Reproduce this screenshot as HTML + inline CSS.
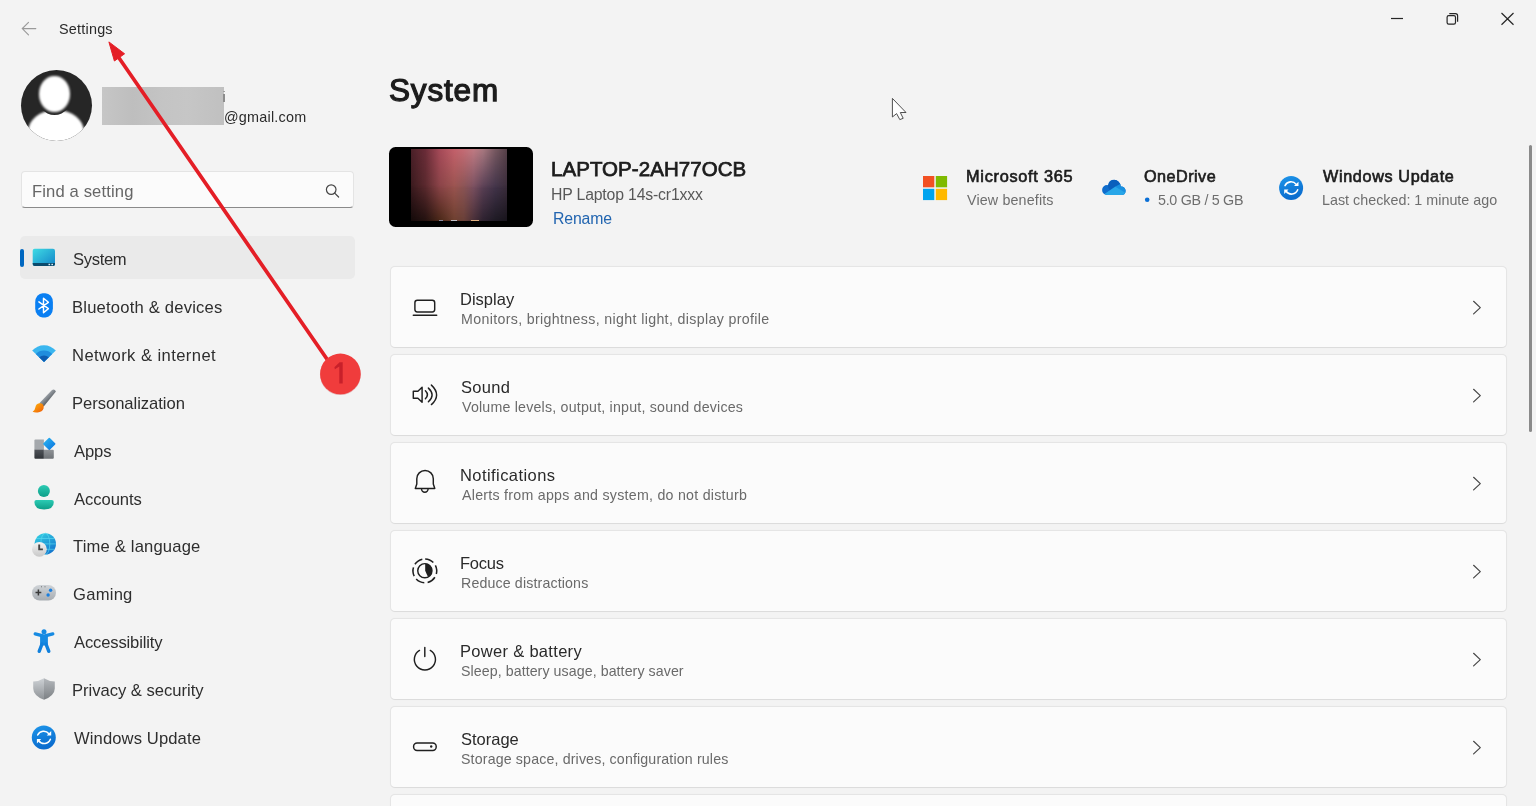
<!DOCTYPE html>
<html><head><meta charset="utf-8"><title>Settings</title>
<style>
html,body{margin:0;padding:0;width:1536px;height:806px;overflow:hidden;background:#f3f3f3;font-family:"Liberation Sans",sans-serif;}
.t{position:absolute;white-space:nowrap;will-change:transform;}
.abs{position:absolute;}
.card{position:absolute;left:390px;width:1115px;height:80.8px;background:#fbfbfb;border:1px solid #e5e5e5;border-bottom-color:#dcdcdc;border-radius:5px;box-sizing:content-box;box-shadow:0 0 0.8px rgba(0,0,0,0.07);}
svg.ov{position:absolute;left:0;top:0;}
</style></head><body>

<!-- avatar -->
<div class="abs" style="left:21.3px;top:69.9px;width:71.2px;height:71.2px;border-radius:50%;background:#262626;overflow:hidden;">
  <div class="abs" style="left:7px;top:40px;width:56px;height:50px;border-radius:27px 27px 0 0 / 22px 22px 0 0;background:#fff;filter:blur(0.9px)"></div>
  <div class="abs" style="left:14.8px;top:2.6px;width:37px;height:42.5px;border-radius:50%;background:#262626;filter:blur(0.6px)"></div>
  <div class="abs" style="left:18.1px;top:5.9px;width:30.6px;height:36px;border-radius:50%;background:#fff;filter:blur(0.9px)"></div>
</div>
<!-- blurred name -->
<div class="abs" style="left:102.4px;top:87.1px;width:121.7px;height:37.6px;background:linear-gradient(90deg,#c6c6c6,#bebebe 25%,#c4c4c4 50%,#c6c6c6 70%,#c0c0c0);"></div>
<div class="abs" style="left:223.4px;top:93.7px;width:1.6px;height:8.6px;background:#8c8c8c;"></div><div class="abs" style="left:223.4px;top:90.6px;width:1.6px;height:1.5px;background:#a0a0a0;"></div>

<!-- search box -->
<div class="abs" style="left:21px;top:171px;width:331px;height:35px;background:#fbfbfb;border:1px solid #e4e4e4;border-bottom:1px solid #8a8a8a;border-radius:4px;"></div>

<!-- nav selection -->
<div class="abs" style="left:20px;top:236px;width:335px;height:43px;background:#eaeaea;border-radius:5px;"></div>
<div class="abs" style="left:20px;top:249px;width:3.5px;height:18px;background:#0067c0;border-radius:2px;"></div>

<!-- device image -->
<div class="abs" style="left:389px;top:147.4px;width:144px;height:80px;background:#000;border-radius:6.5px;overflow:hidden;">
  <div class="abs" style="left:22px;top:2px;width:96px;height:72px;background:linear-gradient(90deg,#140a0a 0%,#241210 15%,#4a2818 30%,#6e4030 45%,#6a4038 55%,#4a3038 65%,#2e2230 75%,#1e1a24 88%,#18141c 100%);"></div>
  <div class="abs" style="left:22px;top:2px;width:96px;height:72px;background:linear-gradient(90deg,#3a1a1e 0%,#5a2a2e 15%,#8a4448 30%,#9a5450 45%,#8a5455 55%,#7a5060 65%,#5a4055 75%,#42344a 88%,#3a2c3a 100%);-webkit-mask-image:linear-gradient(180deg,#000 0%,#000 50%,rgba(0,0,0,0) 100%);mask-image:linear-gradient(180deg,#000 0%,#000 50%,rgba(0,0,0,0) 100%);"></div>
  <div class="abs" style="left:22px;top:2px;width:96px;height:72px;background:linear-gradient(90deg,#4a2028 0%,#6a2c38 15%,#a54a58 30%,#c2606a 45%,#c46c75 55%,#bf7a82 65%,#a87880 75%,#765860 88%,#554048 100%);-webkit-mask-image:linear-gradient(180deg,#000 0%,rgba(0,0,0,0) 55%);mask-image:linear-gradient(180deg,#000 0%,rgba(0,0,0,0) 55%);"></div>
  <div class="abs" style="left:50px;top:72.5px;width:4px;height:1.5px;background:#8a8aa0;"></div>
  <div class="abs" style="left:62px;top:72.5px;width:6px;height:1.5px;background:#c0c0c8;"></div>
  <div class="abs" style="left:82px;top:72.5px;width:8px;height:1.5px;background:#e0b080;"></div>
</div>

<!-- cards -->
<div class="card" style="top:265.5px"></div>
<div class="card" style="top:353.5px"></div>
<div class="card" style="top:441.5px"></div>
<div class="card" style="top:529.5px"></div>
<div class="card" style="top:617.5px"></div>
<div class="card" style="top:705.5px"></div>
<div class="card" style="top:793.5px"></div>

<!-- scrollbar -->
<div class="abs" style="left:1529px;top:145px;width:3px;height:287px;background:#8a8a8a;border-radius:2px;"></div>

<div class='t' style='left:59.34px;top:22.31px;font-size:14.4px;line-height:14.4px;font-weight:400;color:#2a2a2a;letter-spacing:0.223px;'>Settings</div>
<div class='t' style='left:223.94px;top:110.11px;font-size:14.4px;line-height:14.4px;font-weight:400;color:#2a2a2a;letter-spacing:0.219px;'>@gmail.com</div>
<div class='t' style='left:32.38px;top:183.75px;font-size:16.6px;line-height:16.6px;font-weight:400;color:#666666;letter-spacing:0.136px;'>Find a setting</div>
<div class='t' style='left:73.09px;top:252.05px;font-size:16.6px;line-height:16.6px;font-weight:400;color:#2e2e2e;letter-spacing:-0.341px;'>System</div>
<div class='t' style='left:72.18px;top:299.95px;font-size:16.6px;line-height:16.6px;font-weight:400;color:#2e2e2e;letter-spacing:0.203px;'>Bluetooth &amp; devices</div>
<div class='t' style='left:72.18px;top:347.85px;font-size:16.6px;line-height:16.6px;font-weight:400;color:#2e2e2e;letter-spacing:0.426px;'>Network &amp; internet</div>
<div class='t' style='left:72.18px;top:395.75px;font-size:16.6px;line-height:16.6px;font-weight:400;color:#2e2e2e;letter-spacing:-0.039px;'>Personalization</div>
<div class='t' style='left:73.58px;top:443.65px;font-size:16.6px;line-height:16.6px;font-weight:400;color:#2e2e2e;letter-spacing:-0.091px;'>Apps</div>
<div class='t' style='left:73.58px;top:491.55px;font-size:16.6px;line-height:16.6px;font-weight:400;color:#2e2e2e;letter-spacing:-0.056px;'>Accounts</div>
<div class='t' style='left:73.12px;top:539.45px;font-size:16.6px;line-height:16.6px;font-weight:400;color:#2e2e2e;letter-spacing:0.176px;'>Time &amp; language</div>
<div class='t' style='left:73.28px;top:587.35px;font-size:16.6px;line-height:16.6px;font-weight:400;color:#2e2e2e;letter-spacing:0.245px;'>Gaming</div>
<div class='t' style='left:73.58px;top:635.25px;font-size:16.6px;line-height:16.6px;font-weight:400;color:#2e2e2e;letter-spacing:-0.154px;'>Accessibility</div>
<div class='t' style='left:72.18px;top:683.15px;font-size:16.6px;line-height:16.6px;font-weight:400;color:#2e2e2e;letter-spacing:-0.020px;'>Privacy &amp; security</div>
<div class='t' style='left:73.60px;top:731.05px;font-size:16.6px;line-height:16.6px;font-weight:400;color:#2e2e2e;letter-spacing:0.113px;'>Windows Update</div>
<div class='t' style='left:389.11px;top:74.94px;font-size:31.5px;line-height:31.5px;font-weight:400;color:#1c1c1c;letter-spacing:0.838px;-webkit-text-stroke:1.25px #1c1c1c;'>System</div>
<div class='t' style='left:551.23px;top:158.55px;font-size:20.5px;line-height:20.5px;font-weight:400;color:#1c1c1c;letter-spacing:0.054px;-webkit-text-stroke:0.75px #1c1c1c;'>LAPTOP-2AH77OCB</div>
<div class='t' style='left:551.22px;top:186.53px;font-size:15.8px;line-height:15.8px;font-weight:400;color:#585858;letter-spacing:-0.172px;'>HP Laptop 14s-cr1xxx</div>
<div class='t' style='left:552.92px;top:210.83px;font-size:15.8px;line-height:15.8px;font-weight:400;color:#2265b0;letter-spacing:-0.126px;'>Rename</div>
<div class='t' style='left:966.12px;top:168.40px;font-size:16.3px;line-height:16.3px;font-weight:400;color:#1c1c1c;letter-spacing:0.732px;-webkit-text-stroke:0.65px #1c1c1c;'>Microsoft 365</div>
<div class='t' style='left:966.69px;top:192.70px;font-size:14.3px;line-height:14.3px;font-weight:400;color:#6e6e6e;letter-spacing:0.145px;'>View benefits</div>
<div class='t' style='left:1144.36px;top:168.49px;font-size:16.2px;line-height:16.2px;font-weight:400;color:#1c1c1c;letter-spacing:0.471px;-webkit-text-stroke:0.65px #1c1c1c;'>OneDrive</div>
<div class='t' style='left:1157.51px;top:193.20px;font-size:14.3px;line-height:14.3px;font-weight:400;color:#6e6e6e;letter-spacing:-0.297px;'>5.0 GB / 5 GB</div>
<div class='t' style='left:1323.20px;top:167.99px;font-size:16.2px;line-height:16.2px;font-weight:400;color:#1c1c1c;letter-spacing:0.649px;-webkit-text-stroke:0.65px #1c1c1c;'>Windows Update</div>
<div class='t' style='left:1321.83px;top:192.70px;font-size:14.3px;line-height:14.3px;font-weight:400;color:#6e6e6e;letter-spacing:0.012px;'>Last checked: 1 minute ago</div>
<div class='t' style='left:460.08px;top:290.53px;font-size:16.5px;line-height:16.5px;font-weight:400;color:#2a2a2a;letter-spacing:0.005px;'>Display</div>
<div class='t' style='left:460.77px;top:311.78px;font-size:14.2px;line-height:14.2px;font-weight:400;color:#6a6a6a;letter-spacing:0.350px;'>Monitors, brightness, night light, display profile</div>
<div class='t' style='left:460.99px;top:378.53px;font-size:16.5px;line-height:16.5px;font-weight:400;color:#2a2a2a;letter-spacing:0.275px;'>Sound</div>
<div class='t' style='left:461.51px;top:399.78px;font-size:14.2px;line-height:14.2px;font-weight:400;color:#6a6a6a;letter-spacing:0.211px;'>Volume levels, output, input, sound devices</div>
<div class='t' style='left:460.08px;top:466.53px;font-size:16.5px;line-height:16.5px;font-weight:400;color:#2a2a2a;letter-spacing:0.430px;'>Notifications</div>
<div class='t' style='left:461.58px;top:487.78px;font-size:14.2px;line-height:14.2px;font-weight:400;color:#6a6a6a;letter-spacing:0.267px;'>Alerts from apps and system, do not disturb</div>
<div class='t' style='left:460.08px;top:554.53px;font-size:16.5px;line-height:16.5px;font-weight:400;color:#2a2a2a;letter-spacing:-0.226px;'>Focus</div>
<div class='t' style='left:460.77px;top:575.78px;font-size:14.2px;line-height:14.2px;font-weight:400;color:#6a6a6a;letter-spacing:0.146px;'>Reduce distractions</div>
<div class='t' style='left:460.08px;top:642.53px;font-size:16.5px;line-height:16.5px;font-weight:400;color:#2a2a2a;letter-spacing:0.306px;'>Power &amp; battery</div>
<div class='t' style='left:461.03px;top:663.78px;font-size:14.2px;line-height:14.2px;font-weight:400;color:#6a6a6a;letter-spacing:0.075px;'>Sleep, battery usage, battery saver</div>
<div class='t' style='left:460.99px;top:730.53px;font-size:16.5px;line-height:16.5px;font-weight:400;color:#2a2a2a;letter-spacing:-0.008px;'>Storage</div>
<div class='t' style='left:461.03px;top:751.78px;font-size:14.2px;line-height:14.2px;font-weight:400;color:#6a6a6a;letter-spacing:0.152px;'>Storage space, drives, configuration rules</div>

<svg class="ov" width="1536" height="806" viewBox="0 0 1536 806">
  <defs>
    <linearGradient id="gSys" x1="0" y1="0" x2="1" y2="1"><stop offset="0" stop-color="#3fdbe4"/><stop offset="1" stop-color="#1384c8"/></linearGradient>
    <linearGradient id="gAppD" x1="0" y1="0" x2="0" y2="1"><stop offset="0" stop-color="#50545a"/><stop offset="1" stop-color="#303438"/></linearGradient><linearGradient id="gAppM" x1="0" y1="0" x2="0" y2="1"><stop offset="0" stop-color="#8e9296"/><stop offset="1" stop-color="#6e7276"/></linearGradient><linearGradient id="gDia" x1="0" y1="0" x2="1" y2="1"><stop offset="0" stop-color="#2cb6f2"/><stop offset="1" stop-color="#0a74de"/></linearGradient><linearGradient id="gBrush" gradientUnits="userSpaceOnUse" x1="44" y1="396" x2="49" y2="401"><stop offset="0" stop-color="#a8aeb4"/><stop offset="1" stop-color="#5c6268"/></linearGradient>
    <linearGradient id="gOrange" x1="0" y1="0" x2="1" y2="1"><stop offset="0" stop-color="#ffb70a"/><stop offset="1" stop-color="#ee5a0a"/></linearGradient>
    <linearGradient id="gTeal" x1="0" y1="0" x2="0" y2="1"><stop offset="0" stop-color="#2ccbb4"/><stop offset="1" stop-color="#0e9e88"/></linearGradient>
    <linearGradient id="gGlobe" x1="0.2" y1="0" x2="0.8" y2="1"><stop offset="0" stop-color="#34cde2"/><stop offset="1" stop-color="#1170cc"/></linearGradient>
    <linearGradient id="gClock" x1="0" y1="0" x2="0" y2="1"><stop offset="0" stop-color="#f4f4f4"/><stop offset="1" stop-color="#c8c8c8"/></linearGradient>
    <linearGradient id="gPad" x1="0" y1="0" x2="0" y2="1"><stop offset="0" stop-color="#cfd3d7"/><stop offset="1" stop-color="#a8adb2"/></linearGradient>
    <linearGradient id="gShL" x1="0" y1="0" x2="0" y2="1"><stop offset="0" stop-color="#cdd1d5"/><stop offset="1" stop-color="#8e9296"/></linearGradient><linearGradient id="gShR" x1="0" y1="0" x2="0" y2="1"><stop offset="0" stop-color="#b4b8bc"/><stop offset="1" stop-color="#7c8084"/></linearGradient><linearGradient id="gShield" x1="0" y1="0" x2="1" y2="0"><stop offset="0" stop-color="#b8bcc0"/><stop offset="0.5" stop-color="#a4a8ac"/><stop offset="0.5" stop-color="#8c9094"/><stop offset="1" stop-color="#7a7e82"/></linearGradient>
    <linearGradient id="gWU" x1="0" y1="0" x2="0.3" y2="1"><stop offset="0" stop-color="#1e96ea"/><stop offset="1" stop-color="#0a6cce"/></linearGradient>
  </defs>

  <!-- back arrow -->
  <g stroke="#9a9a9a" stroke-width="1.15" fill="none" stroke-linecap="round">
    <path d="M22.4 28.6 H35.8 M28.5 22.4 L22.3 28.6 L28.5 34.8"/>
  </g>
  <!-- window controls -->
  <g stroke="#262626" stroke-width="1.2" fill="none">
    <path d="M1391 18.5 H1403"/>
    <path d="M1449.3 13.6 H1455.5 Q1457.6 13.6 1457.6 15.7 V21.8"/>
    <rect x="1447.1" y="15.7" width="8.4" height="8.5" rx="1.6"/>
    <path d="M1501.5 13 L1513.5 24.7 M1513.5 13 L1501.5 24.7"/>
  </g>
  <!-- search icon -->
  <g stroke="#454545" stroke-width="1.2" fill="none" stroke-linecap="round">
    <circle cx="331.2" cy="189.6" r="4.8"/>
    <path d="M334.7 193.1 L338.6 197"/>
  </g>

  <!-- NAV ICONS -->
  <!-- system -->
  <rect x="32.7" y="248.7" width="22.3" height="17.3" rx="2" fill="url(#gSys)"/>
  <path d="M32.7 263 H55 V264 Q55 266 53 266 H34.7 Q32.7 266 32.7 264 Z" fill="#0b4a6c"/>
  <rect x="48.5" y="263.8" width="1.6" height="1.4" fill="#d8eef8"/>
  <rect x="51.4" y="263.8" width="1.6" height="1.4" fill="#d8eef8"/>
  <!-- bluetooth -->
  <rect x="35.2" y="293.2" width="17.7" height="24.3" rx="7.5" ry="9" fill="#0a7ff2"/>
  <path d="M38.9 301.8 L48.4 308.6 L43.5 312.8 V298.2 L48.4 302.3 L38.9 309" stroke="#fff" stroke-width="1.45" fill="none" stroke-linejoin="round" stroke-linecap="round"/>
  <!-- wifi -->
  <path d="M32.2 350.5 A16 16 0 0 1 55.8 350.5 L44 362 Z" fill="#3ab6ef"/>
  <path d="M35.8 354 A11.5 11.5 0 0 1 52.2 354 L44 362 Z" fill="#1f8ddd"/>
  <path d="M39.2 357.3 A7 7 0 0 1 48.8 357.3 L44 362 Z" fill="#0d5cb0"/>
  <!-- brush -->
  <path d="M52 390 Q54.6 388.8 55.9 391.4 L43.7 406.4 L39.3 403.3 Z" fill="url(#gBrush)"/>
  <path d="M39.3 403.3 Q42.8 402.6 43.7 406.4 Q44 410.6 39.6 412 Q35.5 413.1 32.6 411.8 Q35.1 410.1 35.4 407.3 Q35.9 403.7 39.3 403.3 Z" fill="url(#gOrange)"/>
  <!-- apps -->
  <path d="M35.4 439.4 H43.9 V449.4 H34.4 V440.4 Q34.4 439.4 35.4 439.4 Z" fill="#a4a8ac"/>
  <path d="M34.4 449.4 H43.9 V458.8 H35.4 Q34.4 458.8 34.4 457.8 Z" fill="url(#gAppD)"/>
  <path d="M43.9 449.8 H52.8 Q53.8 449.8 53.8 450.8 V457.8 Q53.8 458.8 52.8 458.8 H43.9 Z" fill="url(#gAppM)"/>
  <path d="M49.3 438.6 L54.6 443.9 L49.3 449.2 L44 443.9 Z" fill="url(#gDia)" stroke="url(#gDia)" stroke-width="1.6" stroke-linejoin="round"/>
  <!-- accounts -->
  <circle cx="43.9" cy="491" r="6" fill="url(#gTeal)"/>
  <path d="M34.4 502 Q34.4 500 36.4 500 H51.8 Q53.8 500 53.8 502 Q53.8 509.4 44.1 509.4 Q34.4 509.4 34.4 502 Z" fill="url(#gTeal)"/>
  <!-- time & language -->
  <circle cx="45.3" cy="543.9" r="10.7" fill="url(#gGlobe)"/>
  <g stroke="#5fe0f2" stroke-width="0.8" fill="none" opacity="0.75">
    <ellipse cx="45.3" cy="543.9" rx="4.5" ry="10.7"/>
    <path d="M34.6 543.9 H56 M36 538.5 H54.6 M36 549.3 H54.6"/>
  </g>
  <circle cx="39.4" cy="549.3" r="7.4" fill="url(#gClock)"/>
  <path d="M39.2 544.4 V549.4 H42.9" stroke="#454545" stroke-width="1.9" fill="none"/>
  <!-- gaming -->
  <rect x="32" y="585" width="24" height="15.4" rx="7.7" fill="url(#gPad)"/>
  <path d="M38.4 589.6 V595.4 M35.5 592.5 H41.3" stroke="#3a3a3a" stroke-width="1.5"/>
  <circle cx="50.6" cy="590.3" r="1.7" fill="#1a7fe0"/>
  <circle cx="48.1" cy="595" r="1.7" fill="#1a7fe0"/>
  <circle cx="41.5" cy="586.8" r="0.5" fill="#555"/><circle cx="45" cy="586.8" r="0.5" fill="#555"/>
  <!-- accessibility -->
  <circle cx="44" cy="631.7" r="2.5" fill="#168ae2"/>
  <path d="M35.2 633.9 L44 636.2 L52.8 633.9" stroke="#168ae2" stroke-width="3.3" stroke-linecap="round" stroke-linejoin="round" fill="none"/>
  <path d="M40.1 635.6 H47.9 V644.5 Q47.9 645.6 46.8 645.6 H41.2 Q40.1 645.6 40.1 644.5 Z" fill="#168ae2"/>
  <path d="M42 644 L39.2 651.3 M46 644 L48.8 651.3" stroke="#1180dc" stroke-width="3.4" stroke-linecap="round" fill="none"/>
  <!-- shield -->
  <path d="M44 678.3 Q39 681.5 33.2 681.5 V688.5 Q33.4 695.8 44 699.8 Z" fill="url(#gShL)"/>
  <path d="M44 678.3 Q49 681.5 54.8 681.5 V688.5 Q54.6 695.8 44 699.8 Z" fill="url(#gShR)"/>
  <!-- windows update nav -->
  <circle cx="43.8" cy="737.4" r="12" fill="url(#gWU)"/>
  <g transform="translate(43.8 737.4)">
    <path d="M-6.1 -2.4 A6.6 6.6 0 0 1 5.1 -3.6 M6.6 1.8 A6.6 6.6 0 0 1 -5 3.3" stroke="#fff" stroke-width="1.55" fill="none" stroke-linecap="round"/>
    <path d="M7.4 -6.3 V-1.9 H2.9 Z M-6.9 1.5 V6.1 L-2.6 1.5 Z" fill="#fff"/>
  </g>

  <!-- MS 365 logo -->
  <rect x="923" y="176" width="11.3" height="11.3" fill="#f25022"/>
  <rect x="935.8" y="176" width="11.3" height="11.3" fill="#7fba00"/>
  <rect x="923" y="188.8" width="11.3" height="11.3" fill="#00a4ef"/>
  <rect x="935.8" y="188.8" width="11.3" height="11.3" fill="#ffb900"/>
  <!-- onedrive -->
  <clipPath id="odClip">
    <circle cx="1107.1" cy="190.1" r="5"/>
    <circle cx="1114.3" cy="186.1" r="6.3"/>
    <circle cx="1121.3" cy="190.8" r="4.3"/>
    <rect x="1107" y="188" width="14.5" height="7.1"/>
  </clipPath>
  <g clip-path="url(#odClip)">
    <rect x="1100" y="178" width="28" height="20" fill="#0e6ccc"/>
    <circle cx="1114.3" cy="186.1" r="6.3" fill="#0a5fbc"/>
    <path d="M1115.4 186.6 L1128 180 V196 Z" fill="#1890e0"/>
    <path d="M1102 195.6 L1115.4 186.6 L1127 194 V197 H1100 Z" fill="#28a6e8"/>
  </g>
  <circle cx="1147.2" cy="199.8" r="2.3" fill="#0a6fd6"/>
  <!-- windows update quick -->
  <circle cx="1291.1" cy="188" r="12" fill="url(#gWU)"/>
  <g transform="translate(1291.1 188)">
    <path d="M-6.1 -2.4 A6.6 6.6 0 0 1 5.1 -3.6 M6.6 1.8 A6.6 6.6 0 0 1 -5 3.3" stroke="#fff" stroke-width="1.55" fill="none" stroke-linecap="round"/>
    <path d="M7.4 -6.3 V-1.9 H2.9 Z M-6.9 1.5 V6.1 L-2.6 1.5 Z" fill="#fff"/>
  </g>

  <!-- CARD ICONS -->
  <g stroke="#1f1f1f" stroke-width="1.45" fill="none" stroke-linecap="round" stroke-linejoin="round">
    <!-- display -->
    <rect x="414.9" y="300.3" width="19.8" height="11.6" rx="2.4"/>
    <path d="M413.3 315.3 H436.7"/>
    <!-- sound -->
    <path d="M413.3 391.2 H417.9 L422.1 387.2 V402.2 L417.9 398.2 H413.3 Z"/>
    <path d="M425.4 390.8 Q429.4 394.8 425.4 398.8"/>
    <path d="M428.4 388.1 Q435.8 394.9 428.4 401.7"/>
    <path d="M431.4 385.1 Q441.8 394.9 431.4 404.6"/>
    <!-- bell -->
    <path d="M416.8 484 V478.7 A8.25 8.25 0 0 1 433.3 478.7 V484 L434.8 488.4 H415.3 Z"/>
    <path d="M421.5 488.8 A3.3 3.5 0 0 0 428.1 488.8"/>
    <!-- power -->
    <path d="M419.5 650.4 A10.55 10.55 0 1 0 430.3 650.4"/>
    <path d="M424.8 647.5 V656.4"/>
    <!-- storage -->
    <rect x="413.6" y="742.9" width="22.6" height="7.6" rx="3.5"/>
  </g>
  <circle cx="431.2" cy="746.5" r="1.2" fill="#1f1f1f"/>
  <!-- focus -->
  <circle cx="424.85" cy="570.85" r="11.9" stroke="#1f1f1f" stroke-width="1.55" fill="none" stroke-dasharray="9.0 3.46" stroke-dashoffset="-1.2" transform="rotate(-94 424.85 570.85)"/>
  <circle cx="424.85" cy="570.7" r="7.1" stroke="#1f1f1f" stroke-width="1.45" fill="none"/>
  <path d="M425.2 563.6 A7.1 7.1 0 0 1 428 577.1 L425.2 570.7 Z" fill="#1f1f1f"/>

  <!-- chevrons -->
  <g stroke="#474747" stroke-width="1.2" fill="none" stroke-linecap="round" stroke-linejoin="round">
    <path d="M1473.6 301.3 L1480.3 307.6 L1473.6 313.9"/>
    <path d="M1473.6 389.3 L1480.3 395.6 L1473.6 401.9"/>
    <path d="M1473.6 477.3 L1480.3 483.6 L1473.6 489.9"/>
    <path d="M1473.6 565.3 L1480.3 571.6 L1473.6 577.9"/>
    <path d="M1473.6 653.3 L1480.3 659.6 L1473.6 665.9"/>
    <path d="M1473.6 741.3 L1480.3 747.6 L1473.6 753.9"/>
  </g>

  <!-- cursor -->
  <path d="M892.4 98.4 V117 L896.6 113.6 L899.8 119.6 L903.2 118.3 L900.3 112.5 H906 Z" fill="#fff" stroke="#474747" stroke-width="0.95" stroke-linejoin="round"/>

  <!-- red annotation -->
  <path d="M115.6 53 L327.6 360" stroke="#e41e26" stroke-width="3.7" stroke-linecap="round"/>
  <path d="M108.9 41.9 L124.6 53.8 L114.4 61 Z" fill="#e41e26" stroke="#e41e26" stroke-width="1" stroke-linejoin="round"/>
  <circle cx="340.4" cy="374.6" r="20.4" fill="#ca2c2e" opacity="0.35"/>
  <circle cx="340.4" cy="373.9" r="20.3" fill="#f03c3c"/>
  <path d="M334.4 367.2 L339.6 362.3 H342.7 V383.4 H339.3 V366.6 L334.9 369.3 Z" fill="#c8202a"/>
</svg>
</body></html>
